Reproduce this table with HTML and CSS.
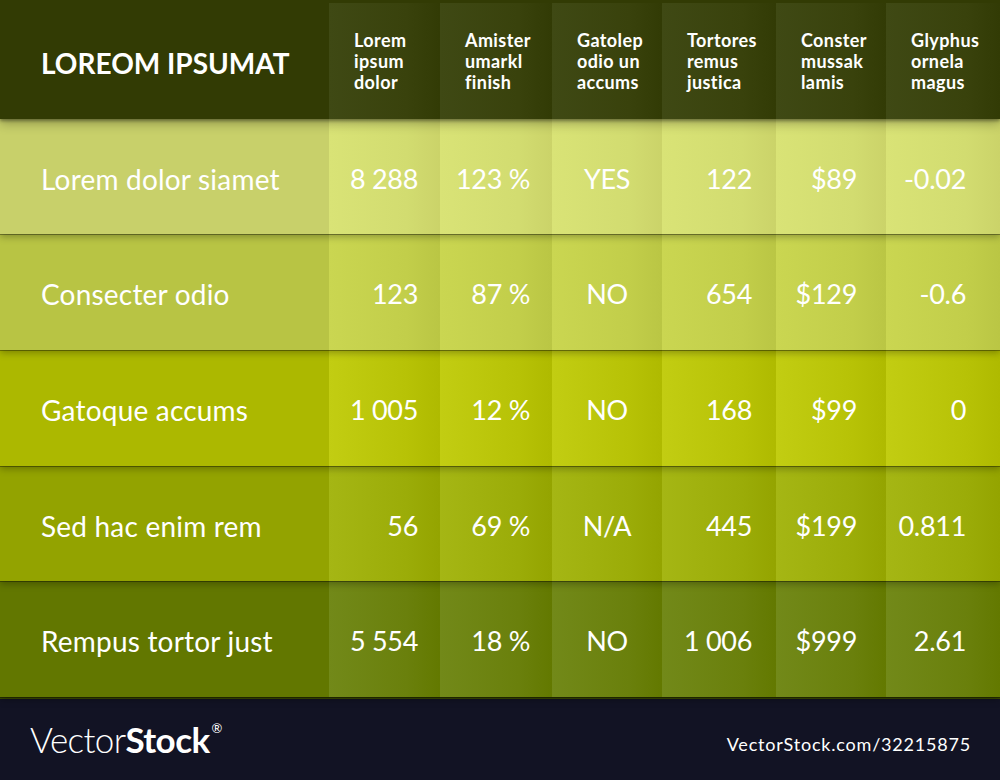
FILE: index.html
```html
<!DOCTYPE html>
<html lang="en">
<head>
<meta charset="utf-8">
<title>Loreom Ipsumat</title>
<link rel="stylesheet" href="styles.css">
</head>
<body>
<div class="page">
  <div class="table">
    <div class="row head">
      <div class="label">LOREOM IPSUMAT</div>
      <div class="cell">Lorem<br>ipsum<br>dolor</div>
      <div class="cell">Amister<br>umarkl<br>finish</div>
      <div class="cell">Gatolep<br>odio un<br>accums</div>
      <div class="cell">Tortores<br>remus<br>justica</div>
      <div class="cell">Conster<br>mussak<br>lamis</div>
      <div class="cell">Glyphus<br>ornela<br>magus</div>
    </div>
    <div class="row r1">
      <div class="label">Lorem dolor siamet</div>
      <div class="cell c1">8 288</div>
      <div class="cell c2">123 %</div>
      <div class="cell c3">YES</div>
      <div class="cell c4">122</div>
      <div class="cell c5">$89</div>
      <div class="cell c6">-0.02</div>
    </div>
    <div class="row r2">
      <div class="label">Consecter odio</div>
      <div class="cell c1">123</div>
      <div class="cell c2">87 %</div>
      <div class="cell c3">NO</div>
      <div class="cell c4">654</div>
      <div class="cell c5">$129</div>
      <div class="cell c6">-0.6</div>
    </div>
    <div class="row r3">
      <div class="label">Gatoque accums</div>
      <div class="cell c1">1 005</div>
      <div class="cell c2">12 %</div>
      <div class="cell c3">NO</div>
      <div class="cell c4">168</div>
      <div class="cell c5">$99</div>
      <div class="cell c6">0</div>
    </div>
    <div class="row r4">
      <div class="label">Sed hac enim rem</div>
      <div class="cell c1">56</div>
      <div class="cell c2">69 %</div>
      <div class="cell c3">N/A</div>
      <div class="cell c4">445</div>
      <div class="cell c5">$199</div>
      <div class="cell c6">0.811</div>
    </div>
    <div class="row r5">
      <div class="label">Rempus tortor just</div>
      <div class="cell c1">5 554</div>
      <div class="cell c2">18 %</div>
      <div class="cell c3">NO</div>
      <div class="cell c4">1 006</div>
      <div class="cell c5">$999</div>
      <div class="cell c6">2.61</div>
    </div>
  </div>
  <footer class="footer">
    <div class="logo"><span class="logo-light">Vector</span><span class="logo-bold">Stock</span><sup class="reg">®</sup></div>
    <div class="url">VectorStock.com/32215875</div>
  </footer>
</div>
</body>
</html>
```

FILE: styles.css
```css
html, body {
  margin: 0;
  padding: 0;
}

body {
  width: 1000px;
  height: 780px;
  overflow: hidden;
  background: #121324;
  font-family: "Lato", "Open Sans", sans-serif;
  color: #ffffff;
}

.page {
  display: flex;
  flex-direction: column;
  height: 780px;
}

.table {
  display: flex;
  flex-direction: column;
}

.row {
  display: grid;
  grid-template-columns: 329px 111px 112px 110px 114px 110px 114px;
  position: relative;
  background: var(--base);
  box-shadow: 0 1px 0 rgba(0, 0, 0, 0.35), 0 3px 7px rgba(0, 0, 0, 0.28);
}

.row .cell {
  background: linear-gradient(to right, var(--cl) 0%, var(--cm) 70%, var(--cr) 100%);
}

.head {
  --base: #323b04;
  --cl: #3f4914;
  --cm: #39420c;
  --cr: #323b05;
  height: 119px;
  padding-top: 3px;
  box-sizing: border-box;
  z-index: 6;
  box-shadow: 0 2px 3px rgba(0, 0, 0, 0.35), 0 5px 10px rgba(0, 0, 0, 0.25);
}

.head .label {
  font-weight: 700;
  font-size: 28px;
  padding-left: 41px;
  display: flex;
  align-items: center;
  padding-top: 3px;
}

.head .cell {
  font-weight: 700;
  font-size: 18px;
  line-height: 21px;
  letter-spacing: 0.4px;
  padding: 27px 0 0 25px;
}

.r1 { --base: #c8d06a; --cl: #d9e376; --cm: #d2dc70; --cr: #cbd369; height: 115px; z-index: 5; }
.r2 { --base: #b8c444; --cl: #cad651; --cm: #c2ce4a; --cr: #bac644; height: 116px; z-index: 4; }
.r3 { --base: #acb800; --cl: #c2cd12; --cm: #b7c206; --cr: #afba00; height: 116px; z-index: 3; }
.r4 { --base: #93a300; --cl: #a5b614; --cm: #9bac08; --cr: #94a400; height: 115px; z-index: 2; }
.r5 { --base: #627700; --cl: #728919; --cm: #6a800c; --cr: #637900; height: 116px; z-index: 1; }

.r1, .r2, .r3, .r4, .r5 {
  font-size: 27px;
  font-weight: 400;
}

.r1 .label, .r2 .label, .r3 .label, .r4 .label, .r5 .label {
  font-size: 28px;
  padding-left: 41px;
  padding-top: 4px;
  display: flex;
  align-items: center;
  letter-spacing: 0.2px;
}

.cell.c1, .cell.c2, .cell.c3, .cell.c4, .cell.c5, .cell.c6 {
  display: flex;
  align-items: center;
  justify-content: flex-end;
  padding-top: 3px;
  letter-spacing: -0.3px;
}

.c1 { padding-right: 22px; }
.c2 { padding-right: 22px; }
.c3 { justify-content: center !important; }
.c4 { padding-right: 24px; }
.c5 { padding-right: 29px; }
.c6 { padding-right: 34px; }

.footer {
  flex: 1;
  background: #121324;
  display: flex;
  align-items: center;
  justify-content: space-between;
  padding: 0 29px 0 30px;
  border-top: 2px solid #3b4a00;
}

.logo {
  font-size: 35px;
  letter-spacing: -0.6px;
  display: flex;
  align-items: flex-start;
  margin-top: -2px;
}

.logo-light {
  font-weight: 300;
}

.logo-bold {
  font-weight: 700;
}

.reg {
  font-size: 13px;
  font-weight: 400;
  margin-left: 2px;
  margin-top: 2px;
}

.url {
  font-size: 18px;
  font-weight: 400;
  letter-spacing: 0.8px;
  margin-top: 8px;
}
```
